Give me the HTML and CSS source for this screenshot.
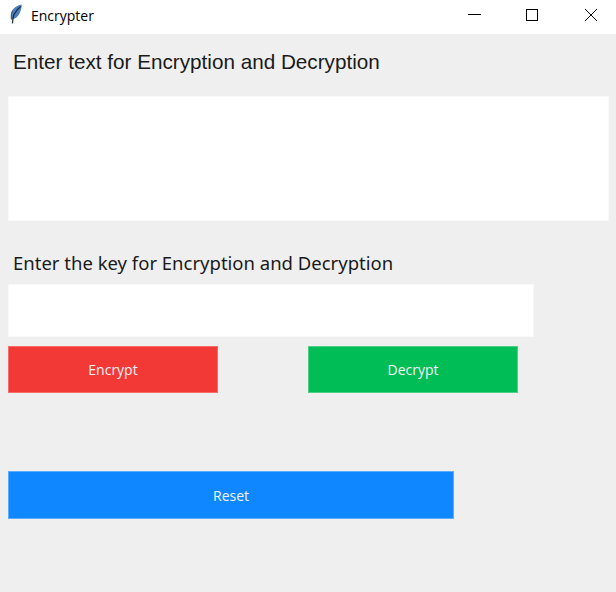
FILE: index.html
```html
<!DOCTYPE html>
<html lang="en">
<head>
    <meta charset="UTF-8">
    <meta name="viewport" content="width=device-width, initial-scale=1.0">
    <title>Encrypter</title>
    <link rel="stylesheet" href="styles.css">
</head>
<body>
    <div class="titlebar">
        <svg class="app-icon" width="14" height="22" viewBox="0 0 14 22">
            <path d="M12.600 .5C9 1 4.500 3.500 2.800 7.500 1.800 10 1.700 13 2.400 15.500 6.500 15 9.800 12 11 8.500 12 5.800 12.800 3 12.600 .5z" fill="#4a7ebd"/>
            <path d="M11.800 2.500C9.500 4 6.500 7.500 5 10.500 4 12.800 3.600 16 3.500 19.500" fill="none" stroke="#1f2a3a" stroke-width="1.200"/>
            <path d="M2.400 15.500C2 12 2.200 9 3.600 6.500" fill="none" stroke="#33415a" stroke-width=".8"/>
        </svg>
        <span class="app-title">Encrypter</span>
        <div class="window-buttons">
            <svg width="58" height="30" viewBox="0 0 58 30"><path d="M22 14.500h13" stroke="#000" fill="none"/></svg>
            <svg width="58" height="30" viewBox="0 0 58 30"><rect x="22.500" y="9.500" width="11" height="11" stroke="#000" fill="none"/></svg>
            <svg width="58" height="30" viewBox="0 0 58 30"><path d="M23 9l12 12M35 9L23 21" stroke="#000" fill="none"/></svg>
        </div>
    </div>

    <div class="container">
        <label class="label-text" for="message">Enter text for Encryption and Decryption</label>
        <textarea id="message" class="text-box"></textarea>

        <label class="label-key" for="key">Enter the key for Encryption and Decryption</label>
        <input type="text" id="key" class="key-box">

        <div class="action-buttons">
            <button class="btn btn-encrypt">Encrypt</button>
            <button class="btn btn-decrypt">Decrypt</button>
        </div>

        <button class="btn btn-reset">Reset</button>
    </div>
</body>
</html>
```

FILE: styles.css
```css
html, body {
    height: 100%;
}
body {
    margin: 0;
    background-color: #efefef;
    color: #1a1a1a;
    overflow: hidden;
}
.titlebar {
    display: flex;
    align-items: center;
    box-sizing: border-box;
    height: 34px;
    padding: 0 0 4px 9px;
    background-color: #fff;
    font-family: "Open Sans", sans-serif;
    font-size: 14px;
    color: #000;
}
.app-icon {
    flex: none;
    margin-right: 8px;
}
.window-buttons {
    display: flex;
    margin-left: auto;
    margin-right: -4px;
}
.container {
    display: flex;
    flex-direction: column;
    align-items: flex-start;
    padding-left: 8px;
}
label {
    display: block;
    margin-left: 5px;
}
.label-text {
    margin-top: 15px;
    height: 25px;
    line-height: 25px;
    font-family: "Liberation Sans", Arial, sans-serif;
    font-size: 20.7px;
}
.label-key {
    margin-top: 29px;
    height: 27px;
    line-height: 26px;
    font-family: "Noto Sans", sans-serif;
    font-size: 18.5px;
    white-space: nowrap;
}
textarea, input {
    display: block;
    box-sizing: border-box;
    border: 1px solid #f9f9f9;
    background-color: #fff;
    padding: 0;
    resize: none;
}
.text-box {
    width: 601px;
    height: 125px;
    margin-top: 22px;
}
.key-box {
    width: 526px;
    height: 53px;
    margin-top: 7px;
}
.action-buttons {
    display: flex;
    gap: 90px;
    margin-top: 9px;
}
.btn {
    display: block;
    box-sizing: border-box;
    width: 210px;
    height: 47px;
    padding: 0;
    border: 1px solid;
    font-family: "Open Sans", sans-serif;
    font-size: 14px;
    color: #f4f4f4;
}
.btn-encrypt {
    background-color: #f23936;
    border-color: #f46d6a;
}
.btn-decrypt {
    background-color: #00bd56;
    border-color: #4dcf87;
}
.btn-reset {
    width: 446px;
    height: 48px;
    margin-top: 78px;
    background-color: #0f87ff;
    border-color: #5cabfc;
}
```
